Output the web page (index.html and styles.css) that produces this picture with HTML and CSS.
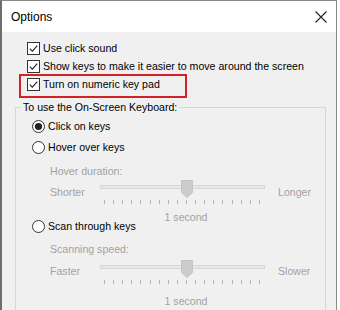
FILE: index.html
```html
<!DOCTYPE html>
<html>
<head>
<meta charset="utf-8">
<link rel="stylesheet" href="styles.css">
</head>
<body>
<div class="window">
  <div class="titlebar">
    <span class="title">Options</span>
    <svg class="close" width="12" height="12" viewBox="0 0 12 12"><path d="M0.5 0.5 L11.5 11.5 M11.5 0.5 L0.5 11.5" stroke="#222" stroke-width="1.1" fill="none"/></svg>
  </div>
  <div class="body">
    <div class="checks">
      <div class="row">
        <svg class="cb" width="13" height="13" viewBox="0 0 13 13"><rect x="0.5" y="0.5" width="12" height="12" fill="#fff" stroke="#333"/><path d="M2.8 6.6 L5.3 9.1 L10.3 3.6" stroke="#222" stroke-width="1.1" fill="none"/></svg>
        <span>Use click sound</span>
      </div>
      <div class="row">
        <svg class="cb" width="13" height="13" viewBox="0 0 13 13"><rect x="0.5" y="0.5" width="12" height="12" fill="#fff" stroke="#333"/><path d="M2.8 6.6 L5.3 9.1 L10.3 3.6" stroke="#222" stroke-width="1.1" fill="none"/></svg>
        <span>Show keys to make it easier to move around the screen</span>
      </div>
      <div class="row highlight">
        <svg class="cb" width="13" height="13" viewBox="0 0 13 13"><rect x="0.5" y="0.5" width="12" height="12" fill="#fff" stroke="#333"/><path d="M2.8 6.6 L5.3 9.1 L10.3 3.6" stroke="#222" stroke-width="1.1" fill="none"/></svg>
        <span>Turn on numeric key pad</span>
      </div>
    </div>
    <fieldset class="group">
      <legend>To use the On-Screen Keyboard:</legend>
      <div class="group-inner">
        <div class="row radio-row">
          <svg class="rb" width="13" height="13" viewBox="0 0 13 13"><circle cx="6.5" cy="6.5" r="6" fill="#fff" stroke="#333"/><circle cx="6.5" cy="6.5" r="3.6" fill="#222"/></svg>
          <span>Click on keys</span>
        </div>
        <div class="row radio-row second">
          <svg class="rb" width="13" height="13" viewBox="0 0 13 13"><circle cx="6.5" cy="6.5" r="6" fill="#fff" stroke="#333"/></svg>
          <span>Hover over keys</span>
        </div>
        <div class="slider-block first-block">
          <div class="dim label">Hover duration:</div>
          <div class="slider-row">
            <span class="dim end-left">Shorter</span>
            <div class="track">
              <svg class="thumb" width="12" height="18" viewBox="0 0 12 18"><path d="M0.5 0.5 H11.5 V12.5 L6 17.5 L0.5 12.5 Z" fill="#cccccc" stroke="#c4c4c4"/></svg>
            </div>
            <span class="dim end-right">Longer</span>
          </div>
          <div class="ticks"><i></i><i></i><i></i><i></i><i></i><i></i><i></i><i></i><i></i><i></i><i></i><i></i><i></i><i></i><i></i><i></i><i></i><i></i></div>
          <div class="dim value">1 second</div>
        </div>
        <div class="row radio-row third">
          <svg class="rb" width="13" height="13" viewBox="0 0 13 13"><circle cx="6.5" cy="6.5" r="6" fill="#fff" stroke="#333"/></svg>
          <span>Scan through keys</span>
        </div>
        <div class="slider-block second-block">
          <div class="dim label">Scanning speed:</div>
          <div class="slider-row">
            <span class="dim end-left">Faster</span>
            <div class="track">
              <svg class="thumb" width="12" height="18" viewBox="0 0 12 18"><path d="M0.5 0.5 H11.5 V12.5 L6 17.5 L0.5 12.5 Z" fill="#cccccc" stroke="#c4c4c4"/></svg>
            </div>
            <span class="dim end-right">Slower</span>
          </div>
          <div class="ticks"><i></i><i></i><i></i><i></i><i></i><i></i><i></i><i></i><i></i><i></i><i></i><i></i><i></i><i></i><i></i><i></i><i></i><i></i></div>
          <div class="dim value">1 second</div>
        </div>
      </div>
    </fieldset>
  </div>
</div>
</body>
</html>
```

FILE: styles.css
```css
* { box-sizing: border-box; }
html, body { margin: 0; padding: 0; background: #ffffff; }
body {
  width: 340px;
  height: 310px;
  overflow: hidden;
  font-family: "Liberation Sans", Arial, sans-serif;
  font-size: 10.6px;
  color: #000;
}
.window {
  width: 337px;
  height: 310px;
  border-left: 2px solid #6e6e6e;
  border-top: 1px solid #8a8a8a;
  border-right: 1px solid #8a8a8a;
  display: flex;
  flex-direction: column;
  overflow: hidden;
}
.titlebar {
  height: 31px;
  flex: none;
  background: #fff;
  display: flex;
  align-items: center;
  justify-content: space-between;
  padding: 0 9px 0 9px;
}
.title { font-size: 12px; color: #000; margin-top: 1px; }
.close { display: block; margin-top: 1px; }
.body {
  flex: 1;
  background: #f0f0f0;
  padding-top: 7px;
}
.checks { padding-left: 25px; }
.row {
  display: flex;
  align-items: center;
  height: 18px;
  line-height: 18px;
  white-space: nowrap;
}
.cb { display: block; flex: none; margin-right: 3px; }
.highlight { position: relative; }
.highlight::after {
  content: "";
  position: absolute;
  left: -8px;
  top: -1px;
  width: 164px;
  height: 20px;
  border: 2px solid #d42027;
}
.group {
  margin: 7px 10px 0 13px;
  padding: 0;
  border: 1px solid #d6d6d6;
  height: 240px;
  min-width: 0;
}
.group legend {
  margin-left: 5px;
  padding: 0 2px;
  line-height: 14px;
}
.group-inner { padding-left: 16px; }
.radio-row { margin-top: 3px; }
.rb { display: block; flex: none; margin-right: 3px; }
.dim { color: #a2a2a2; }
.slider-block { padding-left: 18px; }
.label { line-height: 14px; }
.first-block .label { margin-top: 8px; }
.second-block .label { margin-top: 9px; }
.slider-row {
  display: flex;
  align-items: flex-start;
  height: 17px;
  line-height: 18px;
}
.first-block .slider-row { margin-top: 5px; }
.second-block .slider-row { margin-top: 6px; }
.end-left { width: 50px; flex: none; }
.end-right { margin-left: 13px; }
.track {
  position: relative;
  width: 165px;
  height: 4px;
  flex: none;
  background: #e7e7e7;
  border: 1px solid #d6d6d6;
}
.first-block .track { margin-top: 2px; }
.second-block .track { margin-top: 3px; }
.thumb {
  position: absolute;
  left: 80px;
  top: -6px;
  display: block;
}
.ticks {
  width: 156px;
  height: 4px;
  margin-left: 54px;
  display: flex;
  justify-content: space-between;
}
.ticks i {
  display: block;
  width: 1px;
  height: 4px;
  background: #b4b4b4;
}
.second-block .ticks { margin-top: 1px; }
.value {
  line-height: 12px;
  width: 165px;
  margin-left: 50px;
  padding-left: 7px;
  text-align: center;
}
.first-block .value { margin-top: 7px; }
.second-block .value { margin-top: 11px; }
.radio-row.third { margin-top: -4px; line-height: 14px; height: 14px; }
```
